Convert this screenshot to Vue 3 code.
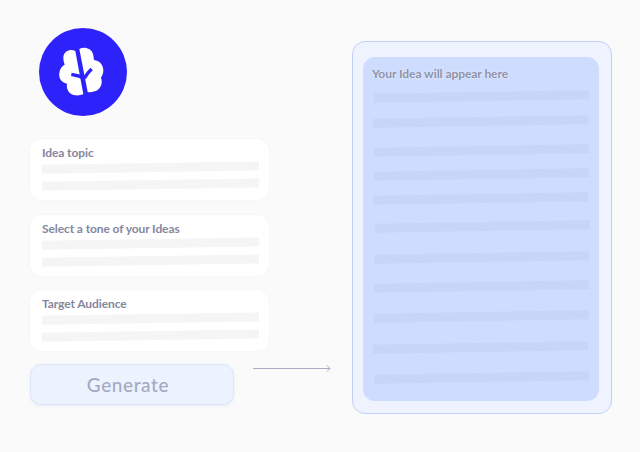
<template>
  <div class="page">
    <div class="left">
      <div class="logo">
        <svg width="88" height="88" viewBox="57 38 264 264">
          <circle cx="189" cy="170" r="132" fill="#2e22fb" />
          <path
            fill="#fff"
            d="M166 107C152 100 132 106 130 126C130 136 132 142 134 148C120 154 114 176 120 190C124 198 132 203 141 205C138 222 148 238 166 240C174 241 182 240 190 237Z"
          />
          <path
            fill="#fff"
            d="M178 101C192 93 214 98 219 116C221 124 221 130 222 134C238 136 250 148 250 165C250 174 247 181 243 187C250 204 240 224 224 228C216 231 209 231 203 230Z"
          />
          <path
            d="M154 177L176 182Q184 184 189 190L196 185Q200 176 215 161"
            fill="none"
            stroke="#2e22fb"
            stroke-width="10"
            stroke-linejoin="round"
          />
        </svg>
      </div>
      <div class="cards">
        <div v-for="label in labels" :key="label" class="card">
          <div class="card-label">{{ label }}</div>
          <div class="bar bar-grey"></div>
          <div class="bar bar-grey"></div>
        </div>
      </div>
      <div class="action">
        <button class="generate">Generate</button>
        <div class="arrow">
          <div class="arrow-line"></div>
          <svg class="arrow-head" width="5" height="7" viewBox="0 0 5 7">
            <path d="M1 .5L4 3.5L1 6.5" fill="none" stroke="#a3a7c2" />
          </svg>
        </div>
      </div>
    </div>
    <div class="panel">
      <div class="panel-inner">
        <div class="panel-title">Your Idea will appear here</div>
        <div
          v-for="line in lines"
          :key="line.top"
          class="bar bar-blue"
          :style="{ top: line.top + 'px', left: line.left + 'px' }"
        ></div>
      </div>
    </div>
  </div>
</template>

<script setup>
const labels = ['Idea topic', 'Select a tone of your Ideas', 'Target Audience']

// bar positions inside the inner panel, they are not evenly spaced in the design
const lines = [
  { top: 34.7, left: 11 },
  { top: 59.7, left: 9.5 },
  { top: 89.3, left: 11 },
  { top: 112.5, left: 11 },
  { top: 137.2, left: 9.5 },
  { top: 164.5, left: 12 },
  { top: 196.3, left: 11 },
  { top: 225, left: 11 },
  { top: 254.5, left: 11 },
  { top: 285.5, left: 9.5 },
  { top: 315.5, left: 11 }
]
</script>

<style scoped>
.page {
  display: flex;
  width: 640px;
  height: 452px;
  box-sizing: border-box;
  padding: 28px 0 0 30px;
  overflow: hidden;
  background: #fafafa;
  font-family: Lato, "Liberation Sans", sans-serif;
}

.left {
  width: 301px;
}

.logo {
  width: 88px;
  height: 88px;
  margin: 0 0 23px 9px;
}

.logo svg {
  display: block;
}

.cards {
  display: flex;
  flex-direction: column;
  gap: 14.5px;
  width: 239px;
}

.card {
  height: 61px;
  box-sizing: border-box;
  padding: 7px 10px 0 12px;
  background: #fff;
  border-radius: 12px;
  box-shadow: 0 0 2px rgba(0, 0, 0, 0.05);
}

.card-label {
  margin-bottom: 3px;
  font-size: 12px;
  font-weight: 700;
  line-height: 14px;
  letter-spacing: -0.1px;
  color: #85879f;
}

.bar {
  height: 9px;
  transform: rotate(-0.88deg);
}

.bar-grey {
  margin-bottom: 8px;
  background: #f5f5f6;
}

.bar-blue {
  position: absolute;
  width: 215px;
  background: #c6d6f9;
}

.action {
  display: flex;
  align-items: flex-start;
  gap: 19px;
  margin-top: 13px;
}

.generate {
  width: 204px;
  height: 41px;
  padding: 0 8px 0 0;
  background: #ecf2fe;
  border: 1px solid #dde6fb;
  border-radius: 11px;
  box-shadow: 0 1px 3px rgba(80, 110, 220, 0.1);
  font-family: inherit;
  font-size: 19px;
  font-weight: 500;
  letter-spacing: 0.6px;
  color: #a3aac3;
}

.arrow {
  display: flex;
  align-items: center;
  width: 78px;
  height: 7px;
  margin-top: 1px;
}

.arrow-line {
  flex: 1;
  margin-right: -4px;
  border-top: 1px solid #a9adc8;
}

.arrow-head {
  display: block;
}

.panel {
  width: 260px;
  height: 373px;
  box-sizing: border-box;
  margin: 13px 0 0 21px;
  padding: 15px 12px 11px 10px;
  background: #eef3ff;
  border: 1px solid #bfd0f9;
  border-radius: 13px;
}

.panel-inner {
  position: relative;
  height: 344px;
  background: #cedcfe;
  border-radius: 12px;
}

.panel-title {
  padding: 10px 0 0 9px;
  font-size: 12px;
  font-weight: 700;
  line-height: 14px;
  letter-spacing: -0.05px;
  color: #8e92ab;
  text-shadow: 0 0 2px #f3f6ff;
}
</style>
